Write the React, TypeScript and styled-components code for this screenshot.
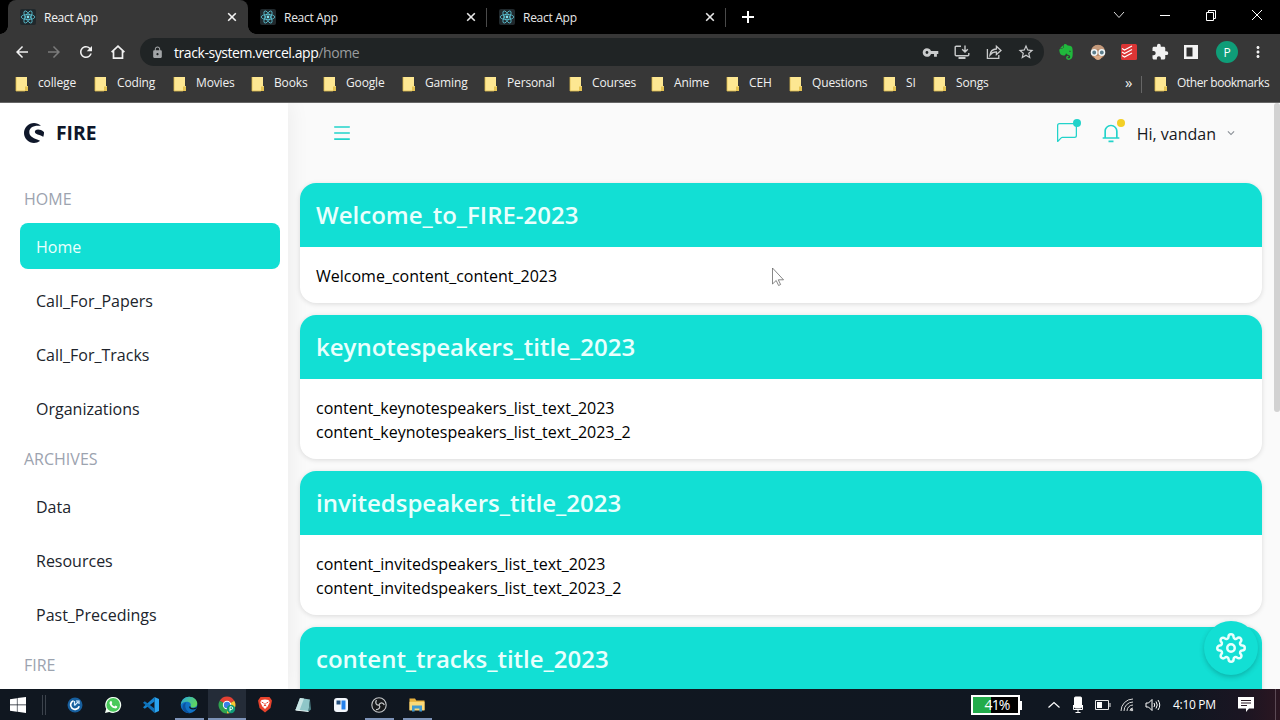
import React from "react";
import styled, { createGlobalStyle } from "styled-components";
import { AiOutlineMenu } from "react-icons/ai";
import { BsChatLeft } from "react-icons/bs";
import { FaEvernote } from "react-icons/fa";
import { FiSettings } from "react-icons/fi";
import {
  MdArrowBack,
  MdArrowForward,
  MdExtension,
  MdKeyboardArrowDown,
  MdLock,
  MdMoreVert,
  MdRefresh,
  MdStarBorder,
  MdVpnKey,
} from "react-icons/md";
import { RiNotification3Line } from "react-icons/ri";
import { SiShopware } from "react-icons/si";

const ACCENT = "#12dfd4";

const GlobalStyle = createGlobalStyle`
  * { box-sizing: border-box; }
  body { margin: 0; overflow: hidden; background: #000; }
  svg { display: block; flex: none; }
`;

const Screen = styled.div`
  width: 1280px;
  height: 720px;
  display: flex;
  flex-direction: column;
  overflow: hidden;
  position: relative;
  font-family: "Open Sans", "Noto Sans", sans-serif;
`;

/* ---------- Browser chrome ---------- */

const TabStrip = styled.div`
  height: 34px;
  flex: none;
  background: #000;
  display: flex;
  align-items: stretch;
  padding-left: 8px;
  color: #fff;
`;

const Tab = styled.div<{ $active?: boolean; $divider?: boolean }>`
  position: relative;
  width: ${(p) => (p.$active ? 240 : 239)}px;
  display: flex;
  align-items: center;
  padding: 0 10px 0 12px;
  border-radius: 8px 8px 0 0;
  background: ${(p) => (p.$active ? "#373737" : "transparent")};
  color: ${(p) => (p.$active ? "#f4f4f4" : "#e8e8e8")};
  &::before,
  &::after {
    content: "";
    display: ${(p) => (p.$active ? "block" : "none")};
    position: absolute;
    bottom: 0;
    width: 8px;
    height: 8px;
  }
  &::before {
    left: -8px;
    background: radial-gradient(circle at 0 0, transparent 7.5px, #373737 8px);
  }
  &::after {
    display: ${(p) => (p.$active || p.$divider ? "block" : "none")};
    right: ${(p) => (p.$active ? -8 : 0)}px;
    bottom: ${(p) => (p.$active ? 0 : 7)}px;
    width: ${(p) => (p.$active ? 8 : 1)}px;
    height: ${(p) => (p.$active ? 8 : 19)}px;
    background: ${(p) =>
      p.$active ? "radial-gradient(circle at 100% 0, transparent 7.5px, #373737 8px)" : "#4a4a4a"};
  }
`;

const TabTitle = styled.span`
  flex: 1;
  margin-left: 8px;
  padding-top: 1px;
  font-size: 12px;
  letter-spacing: -0.28px;
  line-height: 16px;
`;

const NewTab = styled.div`
  display: flex;
  align-items: center;
  margin-left: 15px;
  flex: 1;
`;

const WindowButtons = styled.div`
  display: flex;
  align-items: center;
  height: 29px;
  gap: 30px;
  padding-right: 15px;
`;

const Toolbar = styled.div`
  height: 37px;
  flex: none;
  background: #373737;
  display: flex;
  align-items: center;
  padding: 0 13px 1px;
  color: #f1f1f1;
`;

const NavButtons = styled.div`
  display: flex;
  width: 127px;
  gap: 14px;
`;

const Omnibox = styled.div`
  width: 904px;
  height: 28px;
  border-radius: 14px;
  background: #202425;
  display: flex;
  align-items: center;
  padding: 0 9px 0 11px;
  color: #c9cbcc;
`;

const Url = styled.span`
  flex: 1;
  margin-left: 10px;
  font-size: 14px;
  letter-spacing: -0.43px;
  color: #fff;
`;

const UrlPath = styled.span`
  color: #999c9e;
`;

const OmniActions = styled.div`
  display: flex;
  align-items: center;
  gap: 14px;
`;

const Extensions = styled.div`
  display: flex;
  align-items: center;
  margin-left: 13px;
  gap: 14px;
`;

const Avatar = styled.div`
  width: 22px;
  height: 22px;
  margin: 0 -3px 0 3px;
  border-radius: 50%;
  background: #0f9d78;
  color: #fff;
  display: grid;
  place-items: center;
  font-size: 12px;
`;

const Bookmarks = styled.div`
  height: 32px;
  flex: none;
  background: #373737;
  border-bottom: 1px solid #666;
  display: flex;
  align-items: center;
  padding: 0 0 5px 15px;
  color: #f0f0f0;
  font-size: 12px;
`;

const Bookmark = styled.div<{ $width: number; $gap: number; $tracking?: number }>`
  width: ${(p) => p.$width}px;
  display: flex;
  align-items: center;
  gap: ${(p) => p.$gap}px;
  letter-spacing: ${(p) => p.$tracking ?? -0.15}px;
  white-space: nowrap;
`;

const BookmarkName = styled.span`
  line-height: 16px;
  padding-bottom: 2px;
`;

const Overflow = styled.div`
  display: flex;
  align-items: center;
  justify-content: space-between;
  width: 17px;
  height: 17px;
  margin: 0 12px 0 auto;
  border-right: 1px solid #666;
  font-size: 15px;
  line-height: 15px;
  padding-bottom: 3px;
`;

/* ---------- Application page ---------- */

const Page = styled.div`
  height: 586px;
  flex: none;
  display: flex;
  background: #fafafa;
  overflow: hidden;
  position: relative;
  font-size: 16px;
  line-height: 24px;
  color: #000;
`;

const Sidebar = styled.aside`
  width: 288px;
  flex: none;
  background: #fff;
  box-shadow: 0 0 22px rgba(0, 0, 0, 0.07);
  padding: 0 8px 0 20px;
`;

const Brand = styled.div`
  display: flex;
  align-items: center;
  gap: 12px;
  height: 28px;
  margin: 16px 0 40px 4px;
  font-size: 19.3px;
  font-weight: 700;
  letter-spacing: 0;
  color: #0f172a;
`;

const SectionLabel = styled.p`
  margin: 16px 0 12px 4px;
  font-weight: 400;
  color: #9ca3af;
`;

const NavItem = styled.div<{ $active?: boolean }>`
  height: 46px;
  margin-bottom: 8px;
  padding: 12px 16px 10px;
  border-radius: 8px;
  background: ${(p) => (p.$active ? ACCENT : "transparent")};
  color: ${(p) => (p.$active ? "#e9fffd" : "#20242c")};
`;

const Main = styled.main`
  flex: 1;
  display: flex;
  flex-direction: column;
`;

const Navbar = styled.header`
  height: 60px;
  flex: none;
  display: flex;
  align-items: center;
  padding: 0 36px 0 44px;
  margin-bottom: 20.4px;
  color: #22d3ca;
`;

const MenuToggle = styled.div`
  margin-right: auto;
`;

const Notifier = styled.div<{ $dot: string }>`
  position: relative;
  margin-right: 24px;
  &::after {
    content: "";
    position: absolute;
    width: 8px;
    height: 8px;
    border-radius: 50%;
    top: -4px;
    right: -4px;
    background: ${(p) => p.$dot};
  }
`;

const Greeting = styled.span`
  margin: 1px 8px 0 -8px;
  color: #16181d;
`;

const Cards = styled.section`
  display: flex;
  flex-direction: column;
  gap: 12px;
  padding: 0 12px;
`;

const Card = styled.article`
  border-radius: 16px;
  background: #fff;
  overflow: hidden;
  flex: none;
  box-shadow: 0 1px 5px rgba(0, 0, 0, 0.13);
`;

const CardTitle = styled.h2`
  margin: 0;
  padding: 16px;
  height: 64px;
  line-height: 32px;
  font-size: 24px;
  font-weight: 600;
  background: ${ACCENT};
  color: #e9fffd;
`;

const CardBody = styled.div`
  padding: 16.3px 16px 15.7px;
`;

const Scrollbar = styled.div`
  width: 6px;
  flex: none;
  background: #fafafa;
  &::before {
    content: "";
    display: block;
    height: 309px;
    border-radius: 3px;
    background: #d2d2d2;
  }
`;

const SettingsButton = styled.div`
  position: absolute;
  left: 1204px;
  top: 518px;
  width: 54px;
  height: 54px;
  border-radius: 50%;
  background: ${ACCENT};
  color: #e9fffd;
  display: grid;
  place-items: center;
  box-shadow: 0 2px 5px rgba(0, 60, 60, 0.28);
`;

const Pointer = styled.div`
  position: absolute;
  left: 771px;
  top: 164px;
`;

/* ---------- Taskbar ---------- */

const Taskbar = styled.div`
  height: 31px;
  flex: none;
  display: flex;
  align-items: stretch;
  color: #fff;
  background: linear-gradient(90deg, #101720 0, #101721 1180px, #1a1522 1240px, #2b1621 1280px);
`;

const StartArea = styled.div`
  width: 56px;
  display: flex;
  align-items: center;
  padding-left: 10px;
  gap: 16px;
`;

const Grip = styled.div`
  width: 4px;
  height: 20px;
  border: solid #3c434c;
  border-width: 0 1px;
`;

const TaskItem = styled.div<{ $open?: boolean; $focused?: boolean }>`
  width: 38px;
  display: grid;
  place-items: center;
  position: relative;
  background: ${(p) => (p.$focused ? "#242c38" : "transparent")};
  &::after {
    content: "";
    display: ${(p) => (p.$open ? "block" : "none")};
    position: absolute;
    bottom: 0;
    left: ${(p) => (p.$focused ? 0 : 5)}px;
    right: ${(p) => (p.$focused ? 0 : 4)}px;
    height: 2px;
    background: #7d93b8;
  }
`;

const Charge = styled.div`
  position: relative;
  width: 49px;
  height: 20px;
  margin: 6px 0 0 auto;
  border: 2px solid #fff;
  background: linear-gradient(90deg, #22ac4b 18px, #000 18px);
  font-size: 14px;
  line-height: 16px;
  letter-spacing: -0.9px;
  text-align: center;
  padding-left: 3px;
  &::after {
    content: "";
    position: absolute;
    right: -4px;
    top: 4px;
    width: 2px;
    height: 9px;
    background: #fff;
  }
`;

const Tray = styled.div`
  width: 260px;
  display: flex;
  align-items: center;
  padding-left: 27px;
`;

const TraySlot = styled.div<{ $width: number }>`
  width: ${(p) => p.$width}px;
  display: grid;
  place-items: center;
`;

const Clock = styled.span`
  width: 58px;
  margin-left: 17px;
  padding-left: 1px;
  font-size: 12px;
  letter-spacing: -0.3px;
  white-space: nowrap;
`;

const ShowDesktop = styled.div`
  margin-left: auto;
  width: 5px;
  height: 31px;
  border-left: 1px solid #5c4a55;
`;

/* ---------- Icons ---------- */

const ReactLogo = () => (
  <svg width="16" height="16" viewBox="0 0 16 16">
    <rect width="16" height="16" rx="2" fill="#20282c" />
    <g fill="none" stroke="#5cc5d6" strokeWidth="0.8">
      <ellipse cx="8" cy="8" rx="6.8" ry="2.6" />
      <ellipse cx="8" cy="8" rx="6.8" ry="2.6" transform="rotate(60 8 8)" />
      <ellipse cx="8" cy="8" rx="6.8" ry="2.6" transform="rotate(120 8 8)" />
    </g>
    <circle cx="8" cy="8" r="1.4" fill="#7fe3f2" />
  </svg>
);

const Cross = () => (
  <svg width="12" height="12" viewBox="0 0 12 12" stroke="currentColor" strokeWidth="1.6">
    <path d="M2.2 2.2l7.6 7.6M9.8 2.2l-7.6 7.6" />
  </svg>
);

const Folder = () => (
  <svg width="14" height="16" viewBox="0 0 14 16">
    <path d="M1 1h11v9h1v5H1z" fill="#fde792" />
    <path d="M1 1v14h9" stroke="#d9b94c" strokeWidth=".8" fill="none" />
    <path d="M10 15v-4.5h3V15z" fill="#e5c352" />
  </svg>
);

const HomeOutline = () => (
  <svg width="18" height="18" viewBox="0 0 18 18" fill="none" stroke="currentColor" strokeWidth="1.7">
    <path d="M2.6 9.2L9 3.2l6.4 6M4.5 8v7.2h9V8" />
  </svg>
);

const InstallIcon = () => (
  <svg width="18" height="18" viewBox="0 0 18 18" fill="none" stroke="currentColor" strokeWidth="1.4">
    <path d="M8 3.2H3.2Q2.2 3.2 2.2 4.2v7.6q0 1 1 1h11.6q1 0 1-1V10M12 2.5v6.2M9.2 6.2L12 9l2.8-2.8" />
    <path d="M5.5 15h7" strokeWidth="2" />
  </svg>
);

const ShareIcon = () => (
  <svg width="18" height="18" viewBox="0 0 18 18" fill="none" stroke="currentColor" strokeWidth="1.3">
    <path d="M2.4 6v9.4h11.4v-3.4M5 12c.4-3.8 2.6-5.8 6.400-6V3.200L16 7.400l-4.600 4.200V8.900C8.600 8.900 6.600 9.800 5 12z" />
  </svg>
);

const FaceIcon = () => (
  <svg width="18" height="18" viewBox="0 0 18 18">
    <circle cx="9" cy="9" r="7.2" fill="#b58868" />
    <path d="M2.6 6a7.2 7.2 0 0 1 12.8 0z" fill="#c49a7c" />
    <path d="M5 13h8q-1 4-4 4t-4-4z" fill="#d9a985" />
    <g fill="#5b7d8b" stroke="#f0f6f8" strokeWidth="1.5">
      <circle cx="5.2" cy="9.5" r="2.7" />
      <circle cx="12.8" cy="9.5" r="2.7" />
    </g>
  </svg>
);

const TodoistIcon = () => (
  <svg width="16" height="16" viewBox="0 0 16 16">
    <rect width="16" height="16" rx="1.5" fill="#dc3535" />
    <path d="M1 4.500l2.500 1.500L11 2M1 8l2.500 1.500L11 5.500M1 11.500L3.500 13 11 9" fill="none" stroke="#fff" strokeWidth="1.1" />
  </svg>
);

const SidePanelIcon = () => (
  <svg width="16" height="16" viewBox="0 0 16 16">
    <path d="M1 1h14v14H1z" fill="#f3f3f3" />
    <path d="M3.500 3.500H9.500v9H3.500z" fill="#2e2e2e" />
  </svg>
);

const WindowsLogo = () => (
  <svg width="16" height="16" viewBox="0 0 16 16" fill="#fff">
    <path d="M0 2.200L6.900 1.200v6.400H0zM7.500 1.100L16 0v7.600H7.500zM0 8.300h6.900v6.500L0 13.800zM7.500 8.300H16V16l-8.500-1.200z" />
  </svg>
);

const BlueDialIcon = () => (
  <svg width="16" height="16" viewBox="0 0 16 16">
    <circle cx="8" cy="8" r="7.500" fill="#175f9e" />
    <path d="M6.500 3.800a4.400 4.400 0 1 0 5.700 5.400" fill="none" stroke="#fff" strokeWidth="1.700" />
    <path d="M7.500 4v4.500M7.500 8.500l3.500-3.500M9 4h3v3" fill="none" stroke="#d9edff" strokeWidth="1.200" />
  </svg>
);

const WhatsAppIcon = () => (
  <svg width="18" height="18" viewBox="0 0 18 18">
    <path d="M1 17l1.200-4.200A8 8 0 1 1 5.300 15.900z" fill="#f4fff4" />
    <circle cx="9.200" cy="8.900" r="6.800" fill="#49c95a" />
    <path d="M6.300 5.200l1.100-.2.900 2-.7 1c.7 1.300 1.500 2 2.800 2.600l1-1 1.900 1c-.1 1.700-1.400 2-2.600 1.700C8 11.600 6.200 9.800 5.600 7.700c-.2-1 0-1.900.7-2.500z" fill="#fff" />
  </svg>
);

const VsCodeIcon = () => (
  <svg width="18" height="18" viewBox="0 0 18 18">
    <path d="M12.500 1L17 3v12l-4.500 2z" fill="#2aa3ee" />
    <path d="M12.500 1L1 11.200l1.800 1.600L12.500 5.500z" fill="#1583cf" />
    <path d="M12.500 17L1 6.800l1.800-1.600 9.700 7.300z" fill="#0f71b8" />
  </svg>
);

const EdgeIcon = () => (
  <svg width="18" height="18" viewBox="0 0 18 18">
    <defs>
      <linearGradient id="edgeTop" x1="0" y1="0" x2="1" y2=".5">
        <stop offset="0" stopColor="#2aa8dc" />
        <stop offset="1" stopColor="#5fd661" />
      </linearGradient>
    </defs>
    <circle cx="9" cy="9" r="8.300" fill="#1173c6" />
    <path d="M.8 8.500C1.500 3.500 5 .7 9.200.7c5 0 8.100 3.600 8.100 6.800 0 2.700-2 4-4.300 4-2 0-3-.7-2.400-1.600C11.600 8.200 10 5.800 6.800 5.800 4 5.800 1.800 7 .8 8.500z" fill="url(#edgeTop)" />
    <path d="M10.500 10c-.8 1 .5 2.200 2.800 2.200 1.500 0 3-.5 3.700-1.700l-.6 2c-2 1.300-5 1.300-6.500 0-1-.9-.8-2.300.6-2.500z" fill="#101720" />
    <path d="M6.400 6.200C4.200 9 5 14.500 10.500 17.200 5 17.500 2.500 14 2.500 11c0-2.300 1.600-4.300 3.900-4.800z" fill="#0c529f" />
  </svg>
);

const ChromeIcon = () => (
  <svg width="18" height="18" viewBox="0 0 18 18">
    <path d="M9 9L1.700 4.800A8.400 8.400 0 0 1 16.300 4.800z" fill="#e34133" />
    <path d="M9 9L1.700 4.800A8.400 8.400 0 0 0 9 17.400z" fill="#31a350" />
    <path d="M9 9l7.300-4.200A8.400 8.400 0 0 1 9 17.400z" fill="#f8c631" />
    <circle cx="9" cy="9" r="4.200" fill="#fff" />
    <circle cx="9" cy="9" r="3.200" fill="#3d7fe8" />
    <circle cx="13" cy="13" r="4.200" fill="#0f9d78" />
    <path d="M12 15.400v-4.600h1.300a1.300 1.300 0 0 1 0 2.700H12" fill="none" stroke="#fff" strokeWidth=".9" />
  </svg>
);

const BraveIcon = () => (
  <svg width="16" height="17" viewBox="0 0 16 17">
    <path d="M3.500 1h9L15 4.500 13.500 12 8 16.500 2.500 12 1 4.500z" fill="#e8432c" />
    <path d="M4.500 4L8 3.500l3.500.5 1.200 2.200-2 4L8 13l-2.700-2.800-2-4z" fill="#fff" />
    <path d="M4.700 6l2 1.200M11.300 6l-2 1.200M8 7v2.500M6.700 10L8 9.200l1.300.8" stroke="#e8432c" fill="none" />
  </svg>
);

const NotesIcon = () => (
  <svg width="18" height="18" viewBox="0 0 18 18">
    <path d="M6 2l10 1.500-1.500 12L1.500 14z" fill="#8fc6c8" />
    <path d="M6 2l4 .6L5.500 14.500l-4-.5z" fill="#c8e5e4" />
    <path d="M16 3.500l1 10-2.500 2z" fill="#4e8488" />
    <path d="M1.500 14l13 1.500" stroke="#e9f5f5" />
  </svg>
);

const BoardIcon = () => (
  <svg width="14" height="14" viewBox="0 0 14 14">
    <rect width="14" height="14" rx="3" fill="#f3f7fc" />
    <path d="M2.500 2.500h4v4h-4z" fill="#24507f" />
    <path d="M7.500 2.500h4v9h-4z" fill="#2581ec" />
  </svg>
);

const ObsIcon = () => (
  <svg width="16" height="16" viewBox="0 0 16 16" fill="none" stroke="#c6c8ca">
    <circle cx="8" cy="8" r="7.200" fill="#17191c" strokeWidth="1.100" />
    <path d="M8 8c-3 .5-4-2.500-2.500-4.800M8 8c1-3 4.200-2.600 5.300 0M8 8c2 2.200 0 4.800-3 4.700" strokeWidth="1.200" />
  </svg>
);

const ExplorerIcon = () => (
  <svg width="16" height="16" viewBox="0 0 16 16">
    <path d="M.5 1.500h5.500l1.300 2H15.500V13H.5z" fill="#e8b13e" />
    <path d="M.5 4.800h15v8.700H.5z" fill="#fbd978" />
    <path d="M3 8.500h10v6h-2.600v-3H5.600v3H3z" fill="#429ad0" />
  </svg>
);

const TASKS = [
  { name: "dial", icon: <BlueDialIcon /> },
  { name: "whatsapp", icon: <WhatsAppIcon /> },
  { name: "vscode", icon: <VsCodeIcon /> },
  { name: "edge", icon: <EdgeIcon />, open: true },
  { name: "chrome", icon: <ChromeIcon />, open: true, focused: true },
  { name: "brave", icon: <BraveIcon /> },
  { name: "notes", icon: <NotesIcon /> },
  { name: "board", icon: <BoardIcon /> },
  { name: "obs", icon: <ObsIcon />, open: true },
  { name: "explorer", icon: <ExplorerIcon />, open: true },
];

const BOOKMARKS: { name: string; width: number; gap: number }[] = [
  { name: "college", width: 79, gap: 9 },
  { name: "Coding", width: 79, gap: 9 },
  { name: "Movies", width: 78, gap: 9 },
  { name: "Books", width: 72, gap: 9 },
  { name: "Google", width: 79, gap: 9 },
  { name: "Gaming", width: 82, gap: 9 },
  { name: "Personal", width: 85, gap: 9 },
  { name: "Courses", width: 82, gap: 9 },
  { name: "Anime", width: 75, gap: 9 },
  { name: "CEH", width: 63, gap: 9 },
  { name: "Questions", width: 94, gap: 9 },
  { name: "SI", width: 50, gap: 9 },
  { name: "Songs", width: 70, gap: 9 },
];

const SECTIONS = [
  { label: "HOME", items: ["Home", "Call_For_Papers", "Call_For_Tracks", "Organizations"] },
  { label: "ARCHIVES", items: ["Data", "Resources", "Past_Precedings"] },
  { label: "FIRE", items: [] },
];

const CARDS = [
  { title: "Welcome_to_FIRE-2023", lines: ["Welcome_content_content_2023"] },
  {
    title: "keynotespeakers_title_2023",
    lines: ["content_keynotespeakers_list_text_2023", "content_keynotespeakers_list_text_2023_2"],
  },
  {
    title: "invitedspeakers_title_2023",
    lines: ["content_invitedspeakers_list_text_2023", "content_invitedspeakers_list_text_2023_2"],
  },
  { title: "content_tracks_title_2023", lines: [] },
];

const BrowserChrome = () => (
  <>
    <TabStrip>
      {[0, 1, 2].map((i) => (
        <Tab key={i} $active={i === 0} $divider={i > 0}>
          <ReactLogo />
          <TabTitle>React App</TabTitle>
          <Cross />
        </Tab>
      ))}
      <NewTab>
        <svg width="14" height="14" viewBox="0 0 14 14" stroke="#fff" strokeWidth="2">
          <path d="M7 1v12M1 7h12" />
        </svg>
      </NewTab>
      <WindowButtons>
        <svg width="16" height="12" viewBox="0 0 16 12" fill="none" stroke="#ddd">
          <path d="M3 3l5 5.500L13 3" />
        </svg>
        <svg width="16" height="12" viewBox="0 0 16 12" stroke="#fff">
          <path d="M3 6.500h10" />
        </svg>
        <svg width="16" height="12" viewBox="0 0 16 12" fill="none" stroke="#fff">
          <path d="M3.500 3.500h7v8h-7zM5.500 3.500v-2h7v8h-2" />
        </svg>
        <svg width="16" height="12" viewBox="0 0 16 12" stroke="#fff">
          <path d="M3 1l10 10M13 1L3 11" />
        </svg>
      </WindowButtons>
    </TabStrip>
    <Toolbar>
      <NavButtons>
        <MdArrowBack size={18} />
        <MdArrowForward size={18} color="#7b7b7b" />
        <MdRefresh size={18} />
        <HomeOutline />
      </NavButtons>
      <Omnibox>
        <MdLock size={13} color="#a2a5a7" />
        <Url>
          track-system.vercel.app<UrlPath>/home</UrlPath>
        </Url>
        <OmniActions>
          <MdVpnKey size={17} />
          <InstallIcon />
          <ShareIcon />
          <MdStarBorder size={18} />
        </OmniActions>
      </Omnibox>
      <Extensions>
        <FaEvernote size={18} color="#20b83c" />
        <FaceIcon />
        <TodoistIcon />
        <MdExtension size={18} />
        <SidePanelIcon />
        <Avatar>P</Avatar>
        <MdMoreVert size={18} />
      </Extensions>
    </Toolbar>
    <Bookmarks>
      {BOOKMARKS.map((b) => (
        <Bookmark key={b.name} $width={b.width} $gap={b.gap}>
          <Folder />
          <BookmarkName>{b.name}</BookmarkName>
        </Bookmark>
      ))}
      <Overflow>»</Overflow>
      <Bookmark $width={126} $gap={9} $tracking={-0.42}>
        <Folder />
        <BookmarkName>Other bookmarks</BookmarkName>
      </Bookmark>
    </Bookmarks>
  </>
);

export default function App() {
  return (
    <Screen>
      <GlobalStyle />
      <BrowserChrome />
      <Page>
        <Sidebar>
          <Brand>
            <SiShopware size={20} />
            <span>FIRE</span>
          </Brand>
          {SECTIONS.map((s) => (
            <React.Fragment key={s.label}>
              <SectionLabel>{s.label}</SectionLabel>
              {s.items.map((item) => (
                <NavItem key={item} $active={item === "Home"}>
                  {item}
                </NavItem>
              ))}
            </React.Fragment>
          ))}
        </Sidebar>
        <Main>
          <Navbar>
            <MenuToggle>
              <AiOutlineMenu size={20} />
            </MenuToggle>
            <Notifier $dot="#22d3ca">
              <BsChatLeft size={20} />
            </Notifier>
            <Notifier $dot="#f3cf25">
              <RiNotification3Line size={20} />
            </Notifier>
            <Greeting>Hi, vandan</Greeting>
            <MdKeyboardArrowDown size={14} color="#8b9097" />
          </Navbar>
          <Cards>
            {CARDS.map((c) => (
              <Card key={c.title}>
                <CardTitle>{c.title}</CardTitle>
                <CardBody>
                  {c.lines.map((line) => (
                    <div key={line}>{line}</div>
                  ))}
                </CardBody>
              </Card>
            ))}
          </Cards>
        </Main>
        <Scrollbar />
        <SettingsButton>
          <FiSettings size={30} />
        </SettingsButton>
        <Pointer>
          <svg width="14" height="20" viewBox="0 0 14 20" fill="#fff" stroke="#555" strokeWidth=".7">
            <path d="M1.500 1v16l3.700-3.500 2.400 5 2-1-2.300-4.700h5.200z" />
          </svg>
        </Pointer>
      </Page>
      <Taskbar>
        <StartArea>
          <WindowsLogo />
          <Grip />
        </StartArea>
        {TASKS.map((t) => (
          <TaskItem key={t.name} $open={t.open} $focused={t.focused}>
            {t.icon}
          </TaskItem>
        ))}
        <Charge>41%</Charge>
        <Tray>
          <TraySlot $width={14}>
            <svg width="14" height="10" viewBox="0 0 14 10" fill="none" stroke="#fff" strokeWidth="1.200">
              <path d="M1.500 7.500L7 2.500l5.500 5" />
            </svg>
          </TraySlot>
          <TraySlot $width={34}>
            <svg width="12" height="18" viewBox="0 0 12 18" fill="none" stroke="#fff">
              <rect x="2.500" y="1" width="7" height="11" rx="1" fill="#fff" />
              <path d="M1.500 9v4.500h9V9M6 13.500v3M3.500 16.500h5" />
            </svg>
          </TraySlot>
          <TraySlot $width={14}>
            <svg width="16" height="10" viewBox="0 0 16 10" fill="none" stroke="#e6e6e6">
              <path d="M.5.500h13v9H.5zM15 3v4" />
              <path d="M2 2h5v6H2z" fill="#fff" stroke="none" />
            </svg>
          </TraySlot>
          <TraySlot $width={36}>
            <svg width="14" height="14" viewBox="0 0 14 14" fill="none" stroke="#d8d8d8">
              <path d="M1 13A12 12 0 0 1 13 1M4 13a9 9 0 0 1 9-9M7 13a6 6 0 0 1 6-6M10 13a3 3 0 0 1 3-3" />
              <circle cx="12" cy="12" r=".8" fill="#fff" />
            </svg>
          </TraySlot>
          <TraySlot $width={10}>
            <svg width="16" height="14" viewBox="0 0 16 14" fill="none" stroke="#fff">
              <path d="M1 5h2.500L7 1.500v11L3.500 9H1zM9 5q1.500 2 0 4M11 3.500q2.500 3.500 0 7M13 2q3.500 5 0 10" />
            </svg>
          </TraySlot>
          <Clock>4:10 PM</Clock>
          <TraySlot $width={32}>
            <svg width="18" height="17" viewBox="0 0 18 17">
              <path d="M1 1h16v11.500h-5L9 16v-3.500H1z" fill="#fff" />
              <path d="M4 4.500h10M4 7h10M4 9.500h6" stroke="#2a1a26" />
            </svg>
          </TraySlot>
          <ShowDesktop />
        </Tray>
      </Taskbar>
    </Screen>
  );
}
